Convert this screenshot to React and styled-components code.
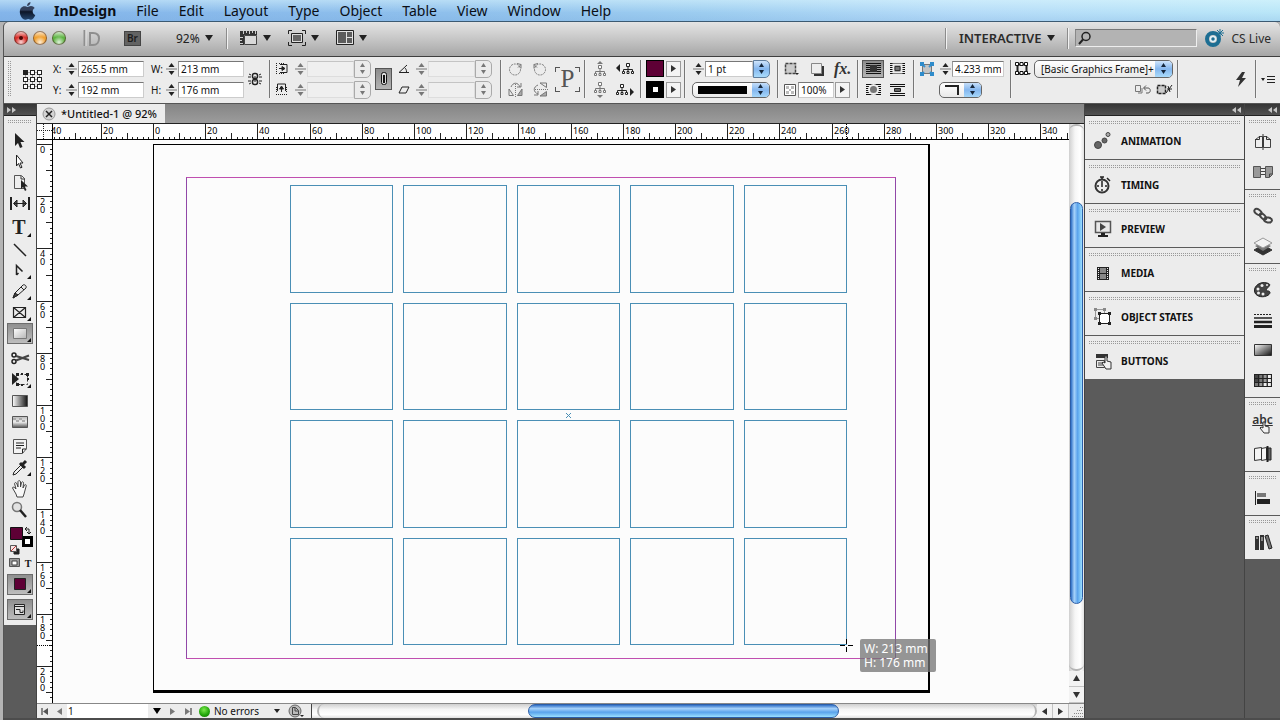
import { useState } from 'react'
import styled, { createGlobalStyle, css } from 'styled-components'

const GlobalStyle = createGlobalStyle`
  * { box-sizing: border-box; }
  body {
    margin: 0;
    font-family: 'Noto Sans', 'Open Sans', sans-serif;
    font-size: 10px;
    color: #111;
    background: #b4b4b4;
  }
  button, input, select {
    font: inherit;
    color: inherit;
    margin: 0;
    padding: 0;
    border: 0;
    border-radius: 0;
    background: none;
    outline-offset: -1px;
  }
  button {
    display: flex;
    align-items: center;
    justify-content: center;
  }
  select { appearance: none; }
  svg { display: block; flex: none; }
`

/* ---------- shell ---------- */

const Screen = styled.div`
  display: flex;
  flex-direction: column;
  height: 100vh;
  min-height: 640px;
  overflow: hidden;
`

const MenuBar = styled.nav`
  display: flex;
  align-items: center;
  flex: none;
  height: 22px;
  padding-left: 19px;
  font-size: 14px;
  border-bottom: 1px solid #3c5a72;
  background:
    linear-gradient(180deg, rgba(225, 250, 255, 0.5), rgba(255, 255, 255, 0) 60%, rgba(110, 160, 215, 0.2)),
    linear-gradient(90deg, #84b5ea, #8fc0ec 35%, #9dcdf0 55%, #b5dbf8 75%, #b9e6f8);
`

const MenuLink = styled.a`
  margin-left: ${({ $gap }) => $gap || 20}px;
  font-weight: ${({ $bold }) => ($bold ? 700 : 400)};
  color: #0b0f16;
  text-decoration: none;
  line-height: 20px;
`

const AppWindow = styled.div`
  display: flex;
  flex-direction: column;
  flex: 1;
  min-height: 0;
  margin: 0 0 2px 3px;
  border-left: 1px solid #555;
  border-radius: 5px 5px 0 0;
  background: #5b5b5b;
  box-shadow: 0 2px 0 #4c4c4c;
`

const AppBar = styled.header`
  display: flex;
  align-items: center;
  flex: none;
  height: 35px;
  padding: 0 9px 2px 10px;
  border-radius: 5px 5px 0 0;
  border-bottom: 1px solid #3f3f3f;
  background: linear-gradient(#e4e4e4, #c6c6c6 50%, #a6a6a6);
`

const Light = styled.button`
  width: 14px;
  height: 14px;
  margin-right: 5px;
  border-radius: 50%;
  border: 1px solid rgba(60, 30, 20, 0.5);
  background: radial-gradient(circle at 50% 85%, rgba(255, 255, 255, 0.8), transparent 50%),
    linear-gradient(rgba(255, 255, 255, 0.7), transparent 45%), ${({ $color }) => $color};
  &::after {
    content: '';
    width: 4px;
    height: 4px;
    border-radius: 50%;
    background: ${({ $dot }) => ($dot ? '#4a0705' : 'transparent')};
  }
`

const BarButton = styled.button`
  gap: ${({ $gap }) => $gap || 9}px;
  margin-left: ${({ $left }) => $left || 0}px;
  font-size: ${({ $size }) => $size || 12}px;
  font-weight: ${({ $bold }) => ($bold ? 600 : 400)};
  color: #2b2b2b;
`

const ZoomSelect = styled.select`
  width: 24px;
  margin-left: 35px;
  font-size: 12px;
  color: #222;
`

const Rule = styled.span`
  flex: none;
  width: 1px;
  height: ${({ $h }) => $h || 38}px;
  margin-left: ${({ $left }) => $left || 0}px;
  background: ${({ $h }) => ($h ? '#8c8c8c' : '#777')};
  box-shadow: 1px 0 0 #f2f2f2;
`

const Spacer = styled.span`
  flex: 1;
`

const Search = styled.label`
  display: flex;
  align-items: center;
  width: 122px;
  height: 18px;
  margin-left: 7px;
  padding: 0 2px;
  border: 1px solid #eee;
  border-top-color: #777;
  border-left-color: #888;
  background: #b3b3b3;
  input {
    flex: 1;
    min-width: 0;
  }
`

/* ---------- control bar ---------- */

const ControlStrip = styled.div`
  display: flex;
  align-items: center;
  flex: none;
  height: 47px;
  padding: 0 0 2px 4px;
  border-bottom: 1px solid #555;
  background: #ececec;
  white-space: nowrap;
`

const Group = styled.div`
  display: grid;
  grid-template-columns: ${({ $cols }) => $cols};
  grid-template-rows: 16px 16px;
  gap: 5px 0;
  flex: none;
  align-items: center;
  margin-left: ${({ $left }) => $left || 0}px;
`

const Cell = styled.span`
  display: flex;
  align-items: center;
  gap: ${({ $gap }) => $gap || 0}px;
  ${({ $end }) => $end && 'justify-content: flex-end;'}
  ${({ $tall }) => $tall && 'grid-row: span 2;'}
`

const FieldLabel = styled.label`
  font-size: 10px;
  line-height: 16px;
`

const StepButton = styled.button`
  width: 13px;
  height: 16px;
`

const TextField = styled.input`
  width: ${({ $w }) => $w || 66}px;
  height: 16px;
  padding: 0 2px;
  border: 1px solid #ccc;
  border-top-color: #777;
  border-left-color: #999;
  background: #fff;
  &:disabled {
    border-color: #ddd;
    border-top-color: #c4c4c4;
    background: #efefef;
  }
`

const blueCap = css`
  border: 1px solid #5f7d9d;
  background: linear-gradient(#cfe4fb, #84b6ee 50%, #a9dbfb);
`

const DropCap = styled.button`
  width: 17px;
  height: 18px;
  border: 1px solid #aaa;
  border-radius: 0 5px 5px 0;
  background: #ebebeb;
  ${({ $blue }) => $blue && blueCap}
`

const IconButton = styled.button`
  width: ${({ $w }) => $w || 16}px;
  height: ${({ $h }) => $h || 16}px;
  margin-left: ${({ $left }) => $left || 0}px;
  ${({ $pressed }) =>
    $pressed &&
    css`
      border: 1px solid #555;
      background: linear-gradient(#8c8c8c, #b4b4b4);
    `}
  ${({ $framed }) =>
    $framed &&
    css`
      border: 1px solid #9a9a9a;
      background: #f4f4f4;
    `}
`

const Popup = styled.button`
  justify-content: space-between;
  width: ${({ $w }) => $w}px;
  height: 16px;
  padding-left: 5px;
  border: 1px solid #666;
  border-radius: 5px;
  background: linear-gradient(#fff, #e9e9e9);
  overflow: hidden;
`

const PopupCap = styled.span`
  display: flex;
  align-items: center;
  justify-content: center;
  width: 17px;
  height: 16px;
  background: linear-gradient(#cfe4fb, #84b6ee 50%, #a9dbfb);
`

const StyleBox = styled.div`
  display: flex;
  align-items: center;
  width: 139px;
  height: 18px;
  border: 1px solid #666;
  border-radius: 5px;
  background: linear-gradient(#fff, #e9e9e9);
  overflow: hidden;
  select {
    flex: 1;
    min-width: 0;
    padding-left: 6px;
  }
`

const Swatch = styled.button`
  width: 18px;
  height: 17px;
  border: 1px solid #000;
  background: ${({ $color }) => $color};
`

/* ---------- workspace ---------- */

const Workspace = styled.div`
  display: flex;
  flex: 1;
  min-height: 0;
`

const DarkHead = styled.div`
  display: flex;
  align-items: center;
  justify-content: ${({ $end }) => ($end ? 'flex-end' : 'flex-start')};
  height: 12px;
  padding: 0 3px;
  border-bottom: 1px solid #222;
  background: linear-gradient(#353535, #525252);
`

const Grip = styled.div`
  width: ${({ $w }) => ($w ? `${$w}px` : 'auto')};
  height: 3px;
  margin: ${({ $m }) => $m || '0 4px'};
  background:
    linear-gradient(#ececec, #ececec) center / 100% 1px no-repeat,
    repeating-linear-gradient(90deg, #999 0 1px, transparent 1px 2px);
`

const SideGrip = styled.div`
  width: 3px;
  height: 36px;
  background:
    linear-gradient(#ececec, #ececec) center / 1px 100% no-repeat,
    repeating-linear-gradient(#999 0 1px, transparent 1px 2px);
`

const ToolColumn = styled.aside`
  flex: none;
  width: 33px;
  border-right: 1px solid #444;
`

const ToolBody = styled.div`
  display: flex;
  flex-direction: column;
  align-items: center;
  padding: 4px 0 5px;
  background: #ececec;
`

const ToolGroup = styled.div`
  display: flex;
  flex-direction: column;
  margin-top: ${({ $top }) => $top || 4}px;
`

const Tool = styled.button`
  width: 26px;
  height: 21px;
  ${({ $active }) =>
    $active &&
    css`
      border: 1px solid #6c6c6c;
      background: linear-gradient(#8f8f8f, #bdbdbd);
    `}
`

const DocumentArea = styled.main`
  display: flex;
  flex-direction: column;
  flex: 1;
  min-width: 0;
  border-right: 1px solid #444;
  background: #fcfcfc;
`

const TabStrip = styled.div`
  display: flex;
  flex: none;
  height: 20px;
  border-bottom: 1px solid #222;
  background: linear-gradient(#858585, #9c9c9c);
`

const Tab = styled.div`
  display: flex;
  align-items: center;
  gap: 5px;
  width: 128px;
  padding-left: 5px;
  font-size: 11px;
  font-weight: 500;
  white-space: nowrap;
  background: #ececec;
`

const Editor = styled.div`
  display: grid;
  grid-template-columns: 16px minmax(0, 1fr) 15px;
  grid-template-rows: 16px minmax(0, 1fr);
  flex: 1;
  min-height: 0;
`

const RulerSvg = styled.svg`
  width: 100%;
  height: 100%;
  overflow: hidden;
  background: #fff;
  font-size: 9px;
`

const Canvas = styled.div`
  position: relative;
  overflow: hidden;
  background: #fcfcfc;
`

const Page = styled.div`
  position: absolute;
  left: 100px;
  top: 4px;
  width: 777px;
  height: 549px;
  border: 1px solid #000;
  border-right-width: 2px;
  border-bottom-width: 3px;
`

const Margins = styled.div`
  position: absolute;
  left: 32px;
  top: 32px;
  width: 710px;
  height: 482px;
  border: 1px solid #c04fb0;
  border-left-color: #9148a8;
  border-right-color: #9148a8;
`

const FrameGrid = styled.div`
  position: absolute;
  left: 136px;
  top: 40px;
  width: 557px;
  height: 460px;
  display: grid;
  grid-template-columns: repeat(5, 1fr);
  grid-template-rows: repeat(4, 1fr);
  gap: 10px;
`

const Frame = styled.div`
  border: 1px solid #4a8fb5;
`

const CenterMark = styled.svg`
  position: absolute;
  left: 412px;
  top: 268px;
`

const Crosshair = styled.svg`
  position: absolute;
  left: 686px;
  top: 494px;
`

const SizeTip = styled.output`
  position: absolute;
  left: 706px;
  top: 494px;
  width: 76px;
  padding: 3px 4px 2px;
  border-radius: 2px;
  background: rgba(115, 115, 115, 0.75);
  color: #fff;
  font-size: 12px;
  line-height: 14px;
  white-space: pre-line;
`

const VScroll = styled.div`
  grid-column: 3;
  grid-row: 1 / span 2;
  display: flex;
  flex-direction: column;
  background: linear-gradient(90deg, #cfcfcf, #f6f6f6 40%, #fff 75%, #e2e2e2);
`

const VThumb = styled.button`
  flex: 405;
  width: 13px;
  margin-left: 1px;
  border: 1px solid #2c5ea8;
  border-radius: 7px;
  background: linear-gradient(90deg, #2f6fc6, #a6d2fa 30%, #5aa3ec 60%, #9be0ff);
`

const ScrollGap = styled.span`
  flex: ${({ $n }) => $n};
  ${({ $cap }) => $cap && css`
    border-${$cap}: 2px solid #b5b5b5;
    border-radius: 7px;
  `}
`

const ArrowButton = styled.button`
  flex: none;
  width: ${({ $v }) => ($v ? 15 : 16)}px;
  height: ${({ $v }) => ($v ? 16 : 14)}px;
  ${({ $v }) => ($v ? 'border-bottom' : 'border-right')}: 1px solid #c4c4c4;
  background: #f3f3f3;
`

const StatusBar = styled.footer`
  display: flex;
  flex: none;
  height: 15px;
  border-top: 1px solid #888;
  background: #ececec;
`

const StatusInfo = styled.div`
  display: flex;
  align-items: center;
  flex: none;
  width: 275px;
  border-right: 1px solid #444;
`

const NavButton = styled.button`
  width: ${({ $w }) => $w || 15}px;
  height: 14px;
`

const PageInput = styled.input`
  width: 81px;
  height: 14px;
  padding-left: 1px;
  background: #fff;
`

const Preflight = styled.button`
  gap: 4px;
  margin-left: 4px;
  font-size: 10px;
`

const GreenDot = styled.span`
  width: 11px;
  height: 11px;
  border-radius: 50%;
  background: radial-gradient(circle at 45% 35%, #7dea4e, #23a70c 55%, #0c6d02);
`

const HScroll = styled.div`
  display: flex;
  flex: 1;
  min-width: 0;
  padding-left: 5px;
  background: linear-gradient(#cfcfcf, #f6f6f6 40%, #fff 75%, #e2e2e2);
`

const HThumb = styled.button`
  flex: 313;
  height: 14px;
  border: 1px solid #2c5ea8;
  border-radius: 7px;
  background: linear-gradient(#2f6fc6, #a6d2fa 30%, #5aa3ec 60%, #9be0ff);
`

/* ---------- panels ---------- */

const PanelColumn = styled.aside`
  flex: none;
  width: ${({ $w }) => $w}px;
  ${({ $line }) => $line && 'border-right: 1px solid #444;'}
`

const PanelRow = styled.button`
  display: grid;
  grid-template-columns: 36px 1fr;
  grid-template-rows: 9px 32px;
  align-content: start;
  justify-items: start;
  align-items: center;
  width: 100%;
  height: 44px;
  border-bottom: 1px solid #5b5b5b;
  background: #ececec;
  font-size: 10px;
  font-weight: 700;
  text-align: left;
  svg { justify-self: center; }
  ${Grip} {
    grid-column: 1 / -1;
    justify-self: stretch;
    align-self: end;
    margin-bottom: 1px;
  }
`

const DockGroup = styled.div`
  display: flex;
  flex-direction: column;
  align-items: stretch;
  padding-bottom: 2px;
  border-bottom: 1px solid #5b5b5b;
  background: #ececec;
`

const DockButton = styled.button`
  width: 35px;
  height: 30px;
`

/* ---------- drawings ---------- */

const Icon = ({ w = 16, h = w, children }) => (
  <svg width={w} height={h} viewBox={`0 0 ${w} ${h}`} fill="none" stroke="#222" aria-hidden="true">
    {children}
  </svg>
)

const Caret = ({ color = '#222' }) => (
  <Icon w={8} h={6}><path d="M0 0h8L4 6z" fill={color} stroke="none" /></Icon>
)

const SmallCaret = () => (
  <Icon w={6} h={4}><path d="M0 0h6L3 4z" fill="#222" stroke="none" /></Icon>
)

const Tri = ({ dir, color = '#333' }) => {
  const d = {
    left: 'M6 0v7L1 3.500z',
    right: 'M1 0v7L6 3.500z',
    up: 'M0 6h7L3.500 0z',
    down: 'M0 1h7L3.500 7z',
  }[dir]
  return <Icon w={7}><path d={d} fill={color} stroke="none" /></Icon>
}

const UpDown = ({ color = '#222', line }) => (
  <Icon w={11} h={14}>
    <path d="M5.500 1l3 4h-6zM5.500 13l3-4h-6z" fill={color} stroke="none" />
    {line && <path d="M0 7h11" stroke="#777" />}
  </Icon>
)

const CapArrows = ({ color = '#16273c' }) => (
  <Icon w={7} h={11}><path d="M3.500 0L6 4H1zM3.500 11L6 7H1z" fill={color} stroke="none" /></Icon>
)

const Chevrons = ({ right }) => (
  <Icon w={9} h={6}>
    <path d={right ? 'M0 0l4 3-4 3zM5 0l4 3-4 3z' : 'M4 0L0 3l4 3zM9 0L5 3l4 3z'} fill="#c6c6c6" stroke="none" />
  </Icon>
)

const AppleLogo = () => (
  <Icon w={17} h={18}>
    <defs>
      <linearGradient id="apple" x1="0" y1="0" x2="0" y2="1">
        <stop offset="0" stopColor="#39435c" />
        <stop offset=".45" stopColor="#32405c" />
        <stop offset=".55" stopColor="#0d1628" />
        <stop offset="1" stopColor="#24466e" />
      </linearGradient>
    </defs>
    <path
      d="M11.500 0c.2 2.200-1.500 4-3.400 4C7.900 2 9.600.3 11.500 0zM8.500 5c1 0 1.800-.9 3.500-.9 1.500 0 2.900.8 3.700 2-3 1.800-2.500 5.800.6 7-.7 2-2.300 4.600-4 4.600-1.200 0-1.700-.8-3.100-.8s-2 .8-3.100.8C3.600 17.700.8 13.600.8 10 .8 6.500 3 4.300 5.300 4.300c1.400 0 2.300.7 3.200.7z"
      fill="url(#apple)" stroke="none"
    />
  </Icon>
)

const IdLogo = () => (
  <Icon w={20} h={18}>
    <path d="M2.500 1v16M8 4h3c4 0 6 2 6 5.500S15 16 11 16H8z" stroke="#8f8f8f" strokeWidth="2" />
    <path d="M4 1v16" stroke="#e4e4e4" />
  </Icon>
)

const Bridge = styled.span`
  display: flex;
  align-items: center;
  justify-content: center;
  width: 17px;
  height: 15px;
  border: 1px solid #444;
  background: #636363;
  color: #1c1c1c;
  font-size: 10px;
  font-weight: 600;
`

const RulerViewIcon = () => (
  <Icon w={19} h={16}>
    <path d="M1 1h17v4H5v10H1z" fill="#333" stroke="none" />
    <path d="M4.500 1v3M7.500 1v2M10.500 1v3M13.500 1v2M16.500 1v3M1 7.500h3M1 10.500h2M1 13.500h3" stroke="#ccc" />
    <path d="M5.500 5.500h12v9h-12z" fill="#d9d9d9" stroke="#444" />
  </Icon>
)

const ScreenModeIcon = () => (
  <Icon w={18} h={16}>
    <path d="M.5 4V.5H4M14 .5h3.500V4M17.500 12v3.500H14M4 15.500H.5V12" />
    <path d="M3.500 3.500h11v9h-11z" fill="#ddd" />
    <path d="M5 5h8v6H5z" fill="#666" stroke="none" />
  </Icon>
)

const ArrangeIcon = () => (
  <Icon w={18} h={16}>
    <path d="M.5.5h17v14H.5z" fill="#e2e2e2" />
    <path d="M2 2h8v11H2zM11 2h5v5h-5zM11 8h5v5h-5z" fill="#5c5c5c" stroke="none" />
  </Icon>
)

const MagnifierIcon = () => (
  <Icon w={14} h={14}>
    <circle cx="8" cy="5.500" r="4" strokeWidth="1.500" />
    <path d="M5 8.500L1 13" strokeWidth="2" />
  </Icon>
)

const CsLiveIcon = () => (
  <Icon w={20} h={18}>
    <circle cx="9" cy="10" r="6" stroke="#1d6e93" strokeWidth="4" />
    <circle cx="9" cy="10" r="2.500" fill="#1d6e93" stroke="#e2f2f8" strokeWidth="1.500" />
    <path d="M16 0v8M12 4h8M13 1l6 6M19 1l-6 6" stroke="#1d6e93" />
  </Icon>
)

const RefPoints = () => (
  <Icon w={19} h={19}>
    <path d="M3 2.500h13M3 9.500h13M3 16.500h13M2.500 3v13M9.500 3v13M16.500 3v13" stroke="#999" />
    {[0, 7, 14].map((y) =>
      [0, 7, 14].map((x) => (
        <rect key={`${x}-${y}`} x={x + 0.5} y={y + 0.5} width="4" height="4" fill={x + y === 0 ? '#222' : '#fff'} />
      ))
    )}
  </Icon>
)

const ChainBroken = () => (
  <Icon w={14}>
    <rect x="4.500" y="1.500" width="5" height="5" rx="2" strokeWidth="1.500" />
    <rect x="4.500" y="7.500" width="5" height="5" rx="2" strokeWidth="1.500" />
    <path d="M7 4v6M1 2l2 1M0 5h3M0 9h3M1 12l2-1M13 2l-2 1M14 5h-3M14 9h-3M13 12l-2-1" />
  </Icon>
)

const ScaleX = ({ turn }) => (
  <Icon w={13} h={13}>
    <g transform={turn ? 'matrix(0 -1 1 0 0 13)' : undefined}>
      <path d="M1.500 1v11M4 1.500h5M4 11.500h5" strokeDasharray="1 1" />
      <path d="M5 2.500h7v8H5" />
      <path d="M4 6.500h5M7 4.500l3 2-3 2z" fill="#222" />
    </g>
  </Icon>
)

const ChainIcon = () => (
  <Icon w={10} h={16}>
    <rect x="2.500" y="1.500" width="5" height="12" rx="2" fill="#ddd" stroke="#111" />
    <path d="M5 4v8" stroke="#111" strokeWidth="2" />
  </Icon>
)

const AngleIcon = () => (
  <Icon w={12} h={10}><path d="M11 8.500H1L9 1M7 4c1 1 1.500 2 1.500 4" /></Icon>
)

const ShearIcon = () => (
  <Icon w={12} h={8}><path d="M4 1h7L8 7H1z" /></Icon>
)

const RotateIcon = ({ flip }) => (
  <Icon w={14}>
    <g transform={flip ? 'matrix(-1 0 0 1 14 0)' : undefined} stroke="#777">
      <circle cx="7" cy="7.500" r="5.500" strokeDasharray="2 1" />
      <path d="M9 1.500l4 1v4M13 2.500l-3 3" />
    </g>
  </Icon>
)

const MirrorIcon = ({ turn }) => (
  <Icon w={15}>
    <g transform={turn ? 'matrix(0 1 1 0 0 0)' : undefined} stroke="#777">
      <path d="M1 13.500V7l4.500 6.500z" /><path d="M14 13.500V7l-4.500 6.500z" fill="#aaa" />
      <path d="M7.500 2v13" strokeDasharray="1 1" />
      <path d="M3 5c2-5 7-5 9 0M13 1v4H9" />
    </g>
  </Icon>
)

const Corners = styled.span`
  display: flex;
  align-items: center;
  justify-content: center;
  width: 25px;
  height: 25px;
  font-family: 'Liberation Serif', serif;
  font-size: 25px;
  color: #555;
  --ink: linear-gradient(#555, #555);
  background:
    var(--ink) 0 0 / 5px 1px, var(--ink) 0 0 / 1px 5px,
    var(--ink) 100% 0 / 5px 1px, var(--ink) 100% 0 / 1px 5px,
    var(--ink) 0 100% / 5px 1px, var(--ink) 0 100% / 1px 5px,
    var(--ink) 100% 100% / 5px 1px, var(--ink) 100% 100% / 1px 5px;
  background-repeat: no-repeat;
`

const TreeIcon = ({ kind }) => {
  const grey = kind === 'up' || kind === 'down'
  const ink = grey ? '#777' : '#222'
  const arrow = {
    up: 'M8 0l3 3H5z',
    down: 'M8 16l3-3H5z',
    left: 'M0 7l4-4v8z',
    right: 'M18 10l-4-4v8z',
  }[kind]
  const shift = { up: '0 2', down: '0 -2', left: '4 0', right: '-2 0' }[kind]
  return (
    <Icon w={18} h={16}>
      <path d={arrow} fill={ink} stroke="none" />
      <g transform={`translate(${shift})`} stroke={ink}>
        <path d="M8 5v3M3.500 11V8.500h9V11M8 8v3" />
        <path d="M6.500 2.500h3v3h-3zM2.500 10.500h2v2h-2zM7 10.500h2v2H7zM11.500 10.500h2v2h-2z" fill="#fff" />
      </g>
    </Icon>
  )
}

const EffectTarget = () => (
  <Icon w={16} h={14}>
    <path d="M1.500 1.500h10v10h-10z" fill="#ccc" stroke="#444" strokeWidth="1.500" strokeDasharray="3 1" />
    <path d="M11 11h4l-2 2z" fill="#222" stroke="none" />
  </Icon>
)

const ShadowIcon = () => (
  <Icon w={14}>
    <path d="M4 4h10v10H4z" fill="#333" stroke="none" />
    <path d="M1.500 1.500h10v10h-10z" fill="#eee" stroke="#888" />
  </Icon>
)

const OpacityIcon = () => (
  <Icon w={12}>
    <path d="M.5.5h11v11H.5z" fill="#fff" stroke="#555" />
    <path d="M2 2h3v3H2zM7 2h3v3H7zM5 5h2v2H5zM2 7h3v3H2zM7 7h3v3H7z" fill="#bbb" stroke="none" />
  </Icon>
)

const Fx = styled.em`
  font-family: 'Liberation Serif', serif;
  font-size: 16px;
  font-weight: 700;
  line-height: 14px;
  color: #333;
`

const WrapIcon = ({ kind }) => (
  <Icon w={15} h={14}>
    {kind === 'jump'
      ? <path d="M0 1.500h15M0 3.500h15M0 10.500h15M0 12.500h15" stroke="#111" />
      : <path d="M0 1.500h15M0 3.500h15M0 5.500h15M0 7.500h15M0 9.500h15M0 11.500h15" stroke="#111" />}
    {kind === 'none' && <path d="M4 3h7v7H4z" fill="#333" stroke="none" />}
    {kind === 'box' && <path d="M3.500 2.500h8v8h-8z" fill="#777" stroke="#eee" strokeWidth="2" />}
    {kind === 'box' && <path d="M5 4.500h5v4H5z" stroke="#333" />}
    {kind === 'shape' && <circle cx="7.500" cy="6.500" r="4.500" fill="#777" stroke="#eee" strokeWidth="2" />}
    {kind === 'jump' && <path d="M4.500 5.500h6v3h-6z" fill="#666" />}
  </Icon>
)

const FitIcon = () => (
  <Icon w={16}>
    <path d="M3.500 3.500h9v9h-9z" fill="#c4c4c4" stroke="#777" />
    <path d="M2 2l4 4M14 2l-4 4M2 14l3-3M14 14l-3-3" stroke="#3c93cf" strokeWidth="2" />
    <path d="M1 1h4v4H1zM11 1h4v4h-4zM1 11h4v4H1zM11 11h4v4h-4z" fill="#2f8ccb" stroke="none" />
  </Icon>
)

const ObjectStyleIcon = () => (
  <Icon w={16} h={14}>
    <path d="M2.500 2.500h9v9h-9z" strokeWidth="2" />
    <path d="M.5.5h3v3h-3zM5 .5h3v3H5zM9.500.5h3v3h-3zM.5 9.500h3v3h-3zM5 9.500h3v3H5zM9.500 9.500h3v3h-3z" fill="#fff" stroke="#111" />
    <path d="M12 11h4l-2 2z" fill="#222" stroke="none" />
  </Icon>
)

const ClearIcon = ({ dark }) => (
  <Icon w={17} h={11}>
    {dark ? (
      <>
        <path d="M1.500 1.500h8v8h-8z" fill="#ccc" strokeWidth="1.500" strokeDasharray="3 1" />
        <path d="M10 9l6-8M11 5h5M12 2l2 6" />
      </>
    ) : (
      <>
        <path d="M1.500 1.500h5v6h-5zM4 9h4V4" stroke="#777" />
        <path d="M10 4h4c3 0 3 5 0 5h-2M12 1.500L9.500 4 12 6.500" stroke="#555" />
      </>
    )}
  </Icon>
)

const Bolt = () => (
  <Icon w={12} h={15}><path d="M7 0L1 8h4L3 15l8-9H7l3-6z" fill="#333" stroke="none" /></Icon>
)

const PanelMenuIcon = () => (
  <Icon w={14} h={9}>
    <path d="M0 3h4L2 6z" fill="#222" stroke="none" /><path d="M6 1.500h8M6 4.500h8M6 7.500h8" />
  </Icon>
)

const ToolArt = ({ children, more }) => (
  <Icon w={24} h={19}>
    {children}
    {more && <path d="M23 14v4h-4z" fill="#111" stroke="none" />}
  </Icon>
)

const toolArt = {
  selection: <ToolArt><path d="M7 2v13l3-3 2 5 2.500-1-2-5h4z" fill="#222" stroke="none" /></ToolArt>,
  direct: <ToolArt><path d="M8.500 3v11l2-2.500 2 4.500 1.500-.7-2-4.300h3z" fill="#fff" /></ToolArt>,
  page: (
    <ToolArt>
      <path d="M6.500 2.500h7l3 3v10h-10z" fill="#eee" stroke="#555" /><path d="M13 3v3h4" stroke="#333" />
      <path d="M13 7v9l2-2 2 4 1.500-1-1.700-3.500H20z" fill="#222" stroke="none" />
    </ToolArt>
  ),
  gap: (
    <ToolArt>
      <path d="M3 3v13M21 3v13" strokeWidth="2" />
      <path d="M6 9.500h12M9 6L5.500 9.500 9 13zM15 6l3.500 3.500L15 13z" fill="#555" />
    </ToolArt>
  ),
  type: (
    <ToolArt more>
      <text x="11" y="15" textAnchor="middle" fontFamily="Liberation Serif, serif" fontWeight="700" fontSize="20" fill="#222" stroke="none">T</text>
    </ToolArt>
  ),
  line: <ToolArt><path d="M6 4l12 12" strokeWidth="1.500" /></ToolArt>,
  pen: <ToolArt more><path d="M8.500 14V4.500l6 6M8.500 14l2-2" strokeWidth="1.500" /></ToolArt>,
  pencil: (
    <ToolArt more>
      <path d="M5 16l2-5 8-8c1.500-1 4 1 3 3l-8 7z" fill="#e8e8e8" /><path d="M5 16l2-5 3 2zM13 5l3 3" fill="#444" />
    </ToolArt>
  ),
  xframe: <ToolArt more><path d="M5.500 4.500h12v10h-12zM5.500 4.500l12 10M17.500 4.500l-12 10" strokeWidth="1.200" /></ToolArt>,
  rectangle: (
    <ToolArt more>
      <defs><linearGradient id="rect" y2="1"><stop stopColor="#fff" /><stop offset="1" stopColor="#b5b5b5" /></linearGradient></defs>
      <path d="M5.500 4.500h13v10h-13z" fill="url(#rect)" stroke="#777" />
    </ToolArt>
  ),
  scissors: (
    <ToolArt>
      <circle cx="6" cy="6" r="2" strokeWidth="1.500" /><circle cx="6" cy="12.500" r="2" strokeWidth="1.500" />
      <path d="M8 7l13 4M8 11.500l13-5" strokeWidth="2" stroke="#444" />
    </ToolArt>
  ),
  transform: (
    <ToolArt more>
      <path d="M8.500 4.500h11v10h-11z" strokeDasharray="2 2" />
      <path d="M8 3h3v3H8zM13 3h2v2h-2zM18 3h3v3h-3zM19 8h2v2h-2zM8 13h3v3H8zM13 14h2v2h-2z" fill="#222" stroke="none" />
      <path d="M4 3v12l7-6z" fill="#222" stroke="none" />
    </ToolArt>
  ),
  gradient: (
    <ToolArt>
      <defs><linearGradient id="g1"><stop stopColor="#fff" /><stop offset="1" stopColor="#111" /></linearGradient></defs>
      <path d="M4.500 4.500h15v11h-15z" fill="url(#g1)" stroke="#555" />
    </ToolArt>
  ),
  feather: (
    <ToolArt>
      <defs><linearGradient id="g2" x2="0" y2="1"><stop stopColor="#bbb" /><stop offset=".5" stopColor="#eee" /><stop offset="1" stopColor="#555" /></linearGradient></defs>
      <path d="M4.500 4.500h15v11h-15z" fill="url(#g2)" stroke="#555" />
      <path d="M5 6h3v2H5zM11 6h3v2h-3zM8 8h3v2H8zM14 8h3v2h-3z" fill="#aaa" stroke="none" />
    </ToolArt>
  ),
  note: (
    <ToolArt>
      <path d="M5.500 2.500h13v9l-4 5h-9z" fill="#f3f3f3" stroke="#555" /><path d="M8 6h8M8 8.500h8M8 11h5M14.500 16v-4h4" />
    </ToolArt>
  ),
  eyedropper: (
    <ToolArt more>
      <path d="M5 17l1-3 7-7 2 2-7 7z" fill="#eee" /><path d="M12 5l5 5M14 7l4-4" strokeWidth="3" />
    </ToolArt>
  ),
  hand: (
    <ToolArt>
      <path d="M8 15L4.500 9c0-1.500 2-1 3.500 1L6.500 4.500c.5-1.500 2-1 2.500.5l1 3V2.500c.5-1.500 2.500-1 2.500.5v5l1-4.500c.7-1.300 2.300-.7 2 .8L15 9l1.500-3c1-1 2-.2 1.700 1L16 15l-1 3H9z" fill="#f8f8f8" stroke="#444" />
    </ToolArt>
  ),
  zoom: (
    <ToolArt>
      <circle cx="9" cy="7" r="4.500" fill="#e2e2e2" stroke="#777" strokeWidth="1.500" /><path d="M12 10l6 7" strokeWidth="2.500" />
    </ToolArt>
  ),
}

const FormatRow = styled.div`
  display: flex;
  align-items: center;
  gap: 5px;
  height: 14px;
  font-family: 'Liberation Serif', serif;
  font-size: 10px;
  font-weight: 700;
`

const FillStroke = () => (
  <Icon w={26} h={32}>
    <path d="M16.500 13.500h8v8h-8z" fill="#fff" stroke="#000" strokeWidth="3" />
    <path d="M3.500 3.500h12v12h-12z" fill="#5e0035" stroke="#111" />
    <path d="M18 5h4v4M20 3l-2 2 2 2M20 8l2 2 2-2" />
    <path d="M7 25h5v5H7z" fill="#222" /><path d="M3.500 21.500h6v6h-6z" fill="#f4e4e4" stroke="#555" />
    <path d="M4 27l5-5" stroke="#b33" />
  </Icon>
)

const P = ({ children }) => <Icon w={20}>{children}</Icon>

const panelArt = {
  ANIMATION: (
    <P>
      <g fill="#666" stroke="#444"><circle cx="5" cy="14" r="3.500" /><circle cx="11.500" cy="9.500" r="2.500" /><circle cx="15" cy="3.500" r="2" fill="#aaa" /></g>
    </P>
  ),
  TIMING: (
    <P>
      <circle cx="9" cy="11" r="6.500" fill="#eee" stroke="#333" strokeWidth="2" />
      <path d="M9 2v2M7 2h4M14 3l3 3M9 6v6M4 11h2M12 11h2M9 14v2" strokeWidth="1.500" />
    </P>
  ),
  PREVIEW: (
    <P>
      <path d="M2.500 2.500h15v11h-15z" fill="#e8e8e8" stroke="#555" strokeWidth="1.500" />
      <path d="M7 4l6 4-6 4z" fill="#444" stroke="none" /><path d="M8 15h4M5 17h10" strokeWidth="2" />
    </P>
  ),
  MEDIA: (
    <P>
      <path d="M4 4h12v13H4z" fill="#222" stroke="none" /><path d="M7 5h6v5H7zM7 11h6v5H7z" fill="#888" stroke="none" />
      <path d="M5.500 5v11M14.500 5v11" stroke="#eee" strokeDasharray="1 1" />
    </P>
  ),
  'OBJECT STATES': (
    <P>
      <path d="M2.500 2.500h9v9h-9z" stroke="#999" /><path d="M1 1h3v3H1zM10 1h3v3h-3zM1 10h3v3H1z" fill="#888" stroke="none" />
      <path d="M6.500 6.500h10v10h-10z" fill="#fff" />
      <path d="M5 5h3v3H5zM15 5h3v3h-3zM5 15h3v3H5zM15 15h3v3h-3z" fill="#222" stroke="none" />
    </P>
  ),
  BUTTONS: (
    <P>
      <path d="M3 3h12v4H3z" fill="#333" stroke="none" /><path d="M3.500 9.500h8v7h-8zM5 12h5M5 14h5" stroke="#444" />
      <path d="M12 5v7l-2-1-1 1 4 6h5v-7l-4-1V5z" fill="#f2f2f2" stroke="#333" />
    </P>
  ),
}

const dockArt = {
  Pages: (
    <P>
      <path d="M2.500 15.500v-8l4-3h3v11zM17.500 15.500v-8l-4-3h-3v11z" fill="#eee" stroke="#444" />
      <path d="M2 7.500h4.500V4M18 7.500h-4.500V4M10 2v16" stroke="#333" />
    </P>
  ),
  'Page Transitions': (
    <Icon w={22} h={16}>
      <path d="M1.500 2.500h7v11h-7zM13.500 2.500h7v8l-3 3h-4z" fill="#999" stroke="#555" />
      <path d="M9 4.500h4M9 7.500h4M9 10.500h4M17.500 13v-3h3" stroke="#444" />
    </Icon>
  ),
  Links: (
    <P>
      <g strokeWidth="2" stroke="#444">
        <ellipse cx="5" cy="6" rx="4" ry="2.500" transform="rotate(35 5 6)" />
        <ellipse cx="15" cy="14" rx="4" ry="2.500" transform="rotate(10 15 14)" />
        <ellipse cx="10" cy="10.500" rx="4" ry="2" transform="rotate(45 10 10.500)" />
      </g>
    </P>
  ),
  Layers: (
    <P>
      <path d="M10 9l9 5-9 5-9-5z" fill="#333" stroke="#333" /><path d="M10 6l8 4-8 5-8-5z" fill="#777" stroke="none" />
      <path d="M10 2l9 5-9 5-9-5z" fill="#f2f2f2" stroke="#999" />
    </P>
  ),
  Color: (
    <P>
      <path d="M14 3C7 1 1 6 1.500 11c.3 5 7 7 12 5 3-1 5-4 2-5-2 0-3-1-1-3s4-4-.5-5z" fill="#444" stroke="#222" />
      <g fill="#eee" stroke="none"><circle cx="5" cy="9" r="1.500" /><circle cx="9" cy="5.500" r="1.500" /><circle cx="5.500" cy="13" r="1.500" /><circle cx="10" cy="14" r="1.500" /><circle cx="14" cy="5" r="1" /></g>
    </P>
  ),
  Stroke: (
    <P>
      <path d="M1 4.500h18" strokeDasharray="2 1" /><path d="M1 8h18" strokeWidth="1.500" />
      <path d="M1 12h18" strokeWidth="2.500" /><path d="M1 16.500h18" strokeWidth="3" />
    </P>
  ),
  Gradient: (
    <P>
      <defs><linearGradient id="g3" y2="1"><stop stopColor="#fff" /><stop offset="1" stopColor="#111" /></linearGradient></defs>
      <path d="M1.500 4.500h17v11h-17z" fill="url(#g3)" stroke="#333" />
    </P>
  ),
  Swatches: (
    <P>
      <path d="M1 4h18v13H1z" fill="#222" stroke="none" />
      {[0, 1, 2, 3].map((c) => [0, 1, 2].map((r) => (
        <rect key={`${c}${r}`} x={2 + c * 4.300} y={5 + r * 4} width="3" height="3" fill={['#444', '#777', '#999', '#eee'][Math.min(3, c + (r > 1))]} stroke="none" />
      )))}
    </P>
  ),
  Bookmarks: (
    <P>
      <path d="M1.500 4.500l7-1v12l-7 1zM8.500 4.500l5-1v12l-5 1z" fill="#f4f4f4" stroke="#333" />
      <path d="M14 4h4v12h-4z" fill="#666" stroke="#222" /><path d="M14.500 2v16" strokeWidth="2" />
    </P>
  ),
  Align: (
    <P>
      <path d="M2.500 3v14" /><path d="M4 5h9v4H4z" fill="#777" stroke="none" /><path d="M4 11h13v5H4z" fill="#222" stroke="none" />
    </P>
  ),
  Library: (
    <P>
      <path d="M2 4h4v14H2zM7 3h4v15H7z" fill="#333" stroke="none" /><path d="M3 6h2M8 6h2M8 8h2" stroke="#ddd" />
      <path d="M12 4l3-1 4 13-3 1z" fill="#777" stroke="#222" />
    </P>
  ),
}

const AbcLabel = styled.span`
  display: grid;
  justify-items: center;
  color: #333;
  font-size: 12px;
  font-weight: 600;
  line-height: 9px;
  text-decoration: underline;
  svg { margin: -3px 0 0 5px; }
`

const HandPointer = () => (
  <Icon w={14} h={13}>
    <path d="M5 1v6L3 6 2 7l4 5h5V6L7 5V1z" fill="#f2f2f2" stroke="#333" />
  </Icon>
)

/* ---------- data ---------- */

const MENUS = ['File', 'Edit', 'Layout', 'Type', 'Object', 'Table', 'View', 'Window', 'Help']

const TOOL_GROUPS = [
  ['selection', 'direct', 'page', 'gap'],
  ['type', 'line', 'pen', 'pencil', 'xframe', 'rectangle'],
  ['scissors', 'transform', 'gradient', 'feather'],
  ['note', 'eyedropper', 'hand', 'zoom'],
]

const DOCK_GROUPS = [
  ['Pages', 'Page Transitions'],
  ['Links', 'Layers'],
  ['Color', 'Stroke', 'Gradient', 'Swatches'],
  ['Hyperlinks', 'Bookmarks'],
  ['Align'],
  ['Library'],
]

const PX_PER_MM = 2.61
const MARKS = Array.from({ length: 800 }, (_, i) => (i - 20) * 2)

/* ---------- parts ---------- */

const tickLength = (mm) => (mm % 20 === 0 ? 16 : mm % 10 === 0 ? 7 : 3)

const Ruler = ({ vertical, origin, cursor }) => {
  // only draw as far as the window reaches
  const reach = vertical ? window.innerHeight - 180 : window.innerWidth - 230
  const place = (mm) => Math.round(origin + mm * PX_PER_MM)
  const marks = MARKS.filter((mm) => place(mm) > -10 && place(mm) < reach + 20)
  const ticks = marks.map((mm) => {
    const at = place(mm) + 0.5
    const from = 16 - tickLength(mm)
    return vertical ? `M${from} ${at}H16` : `M${at} ${from}V16`
  }).join('')
  const labels = marks.filter((mm) => mm % 20 === 0 && place(mm) < reach)
  return (
    <RulerSvg aria-hidden="true">
      <path d={ticks} stroke="#222" />
      <path d={vertical ? 'M15.500 0V4000' : 'M0 15.500H4000'} stroke="#000" />
      <path d={vertical ? `M0 ${cursor}H16` : `M${cursor} 0V16`} stroke="#000" strokeDasharray="1 1" />
      {labels.map((mm) => {
        if (!vertical) return <text key={mm} x={place(mm) + 2} y="10">{Math.abs(mm)}</text>
        return String(mm).split('').map((digit, i) => (
          <text key={`${mm}-${i}`} x="3" y={place(mm) + 9 + i * 8}>{digit}</text>
        ))
      })}
    </RulerSvg>
  )
}

const Stepper = ({ id, label, w, disabled, value }) => (
  <Cell>
    <StepButton aria-label={`Step ${label}`} disabled={disabled}>
      <UpDown line color={disabled ? '#777' : '#222'} />
    </StepButton>
    <TextField id={id} aria-label={label} $w={w} disabled={disabled} defaultValue={value} />
  </Cell>
)

const DisabledCombo = ({ label }) => (
  <Cell>
    <Stepper label={label} w={47} disabled />
    <DropCap aria-label={`${label} presets`} disabled><CapArrows color="#777" /></DropCap>
  </Cell>
)

const ControlBar = () => (
  <ControlStrip>
    <SideGrip />
    <Group $cols="19px" $left={12}><Cell $tall><RefPoints /></Cell></Group>
    <Group $cols="12px 79px" $left={11}>
      <FieldLabel htmlFor="x">X:</FieldLabel><Stepper id="x" label="X" value="265.5 mm" />
      <FieldLabel htmlFor="y">Y:</FieldLabel><Stepper id="y" label="Y" value="192 mm" />
    </Group>
    <Group $cols="14px 79px" $left={7}>
      <FieldLabel htmlFor="w">W:</FieldLabel><Stepper id="w" label="W" value="213 mm" />
      <FieldLabel htmlFor="h">H:</FieldLabel><Stepper id="h" label="H" value="176 mm" />
    </Group>
    <Group $cols="14px" $left={4}><Cell $tall><ChainBroken /></Cell></Group>
    <Rule $left={7} />
    <Group $cols="19px 77px" $left={5}>
      <ScaleX /><DisabledCombo label="Scale X" />
      <ScaleX turn /><DisabledCombo label="Scale Y" />
    </Group>
    <IconButton $w={17} $h={22} $left={4} $pressed aria-label="Constrain proportions"><ChainIcon /></IconButton>
    <Group $cols="17px 77px" $left={6}>
      <AngleIcon /><DisabledCombo label="Rotation" />
      <ShearIcon /><DisabledCombo label="Shear" />
    </Group>
    <Rule $left={8} />
    <Group $cols="25px 22px 25px" $left={7}>
      <RotateIcon /><RotateIcon flip /><Cell $tall><Corners>P</Corners></Cell>
      <MirrorIcon /><MirrorIcon turn />
    </Group>
    <Rule $left={4} />
    <Group $cols="24px 18px" $left={7}>
      <TreeIcon kind="up" /><TreeIcon kind="left" />
      <TreeIcon kind="down" /><TreeIcon kind="right" />
    </Group>
    <Rule $left={6} />
    <Group $cols="20px 15px" $left={5}>
      <Swatch $color="#5e0035" aria-label="Fill" />
      <IconButton $w={15} $framed aria-label="Fill options"><Tri dir="right" /></IconButton>
      <Swatch $color="linear-gradient(#fff, #fff) center / 5px 5px no-repeat, #000" aria-label="Stroke" />
      <IconButton $w={15} $framed aria-label="Stroke options"><Tri dir="right" /></IconButton>
    </Group>
    <Rule $left={3} />
    <Group $cols="78px" $left={7}>
      <Cell>
        <Stepper label="Stroke weight" w={48} value="1 pt" />
        <DropCap $blue aria-label="Stroke weight presets"><CapArrows /></DropCap>
      </Cell>
      <Popup $w={78} aria-label="Stroke type">
        <Icon w={49} h={8}><path d="M0 0h49v8H0z" fill="#000" stroke="none" /></Icon>
        <PopupCap><CapArrows /></PopupCap>
      </Popup>
    </Group>
    <Rule $left={7} />
    <Group $cols="68px" $left={6}>
      <Cell $gap={10}><EffectTarget /><ShadowIcon /><Fx>fx.</Fx></Cell>
      <Cell $gap={2}>
        <OpacityIcon />
        <Cell $gap={1}>
          <TextField $w={36} aria-label="Opacity" defaultValue="100%" />
          <IconButton $w={15} $framed aria-label="Opacity slider"><Tri dir="right" /></IconButton>
        </Cell>
      </Cell>
    </Group>
    <Rule $left={5} />
    <Group $cols="28px 15px" $left={4}>
      <IconButton $w={22} $h={18} $pressed aria-label="No text wrap"><WrapIcon kind="none" /></IconButton>
      <WrapIcon kind="box" />
      <IconButton $w={22} aria-label="Wrap around shape"><WrapIcon kind="shape" /></IconButton>
      <WrapIcon kind="jump" />
    </Group>
    <Rule $left={8} />
    <Group $cols="20px 66px" $left={5}>
      <FitIcon /><Stepper label="Corner size" w={52} value="4.233 mm" />
      <span />
      <Popup $w={43} aria-label="Corner shape">
        <Icon w={14} h={10}><path d="M0 1h13v9" strokeWidth="2" /></Icon>
        <PopupCap><CapArrows /></PopupCap>
      </Popup>
    </Group>
    <Rule $left={5} />
    <Group $cols="19px 139px" $left={4}>
      <ObjectStyleIcon />
      <StyleBox>
        <select aria-label="Object style"><option>[Basic Graphics Frame]+</option></select>
        <PopupCap><CapArrows /></PopupCap>
      </StyleBox>
      <span />
      <Cell $gap={5} $end><ClearIcon /><ClearIcon dark /></Cell>
    </Group>
    <Rule $left={4} />
    <Spacer />
    <IconButton aria-label="Quick apply"><Bolt /></IconButton>
    <Rule $left={6} />
    <IconButton $w={24} aria-label="Panel menu"><PanelMenuIcon /></IconButton>
  </ControlStrip>
)

const ToolBox = () => {
  const [active, setActive] = useState('rectangle')
  return (
    <ToolColumn>
      <DarkHead><Chevrons right /></DarkHead>
      <ToolBody>
        <Grip $w={24} $m="0" />
        {TOOL_GROUPS.map((group, i) => (
          <ToolGroup key={group[0]} $top={i === 0 ? 7 : 4}>
            {group.map((name) => (
              <Tool key={name} aria-label={name} $active={name === active} onClick={() => setActive(name)}>
                {toolArt[name]}
              </Tool>
            ))}
          </ToolGroup>
        ))}
        <ToolGroup><FillStroke /></ToolGroup>
        <FormatRow>
          <Icon w={11} h={10}>
            <path d="M.5.5h10v8H.5z" fill="#999" stroke="#555" /><path d="M3 3h5v4H3z" fill="#fff" stroke="#444" />
          </Icon>
          T
        </FormatRow>
        <ToolGroup>
          <Tool $active aria-label="Apply color">
            <ToolArt more><path d="M6.500 3.500h11v11h-11z" fill="#5e0035" stroke="#222" /></ToolArt>
          </Tool>
        </ToolGroup>
        <ToolGroup>
          <Tool $active aria-label="View mode">
            <ToolArt more>
              <path d="M6.500 4.500h10v10h-10z" fill="#ddd" /><path d="M6 6.500h11M8 9.500h4v3h3v-2" />
            </ToolArt>
          </Tool>
        </ToolGroup>
      </ToolBody>
    </ToolColumn>
  )
}

const Status = () => (
  <StatusBar>
    <StatusInfo>
      <NavButton aria-label="First page"><Icon w={8} h={7}><path d="M1 0v7" /><path d="M7 0v7L2 3.500z" fill="#555" stroke="none" /></Icon></NavButton>
      <NavButton aria-label="Previous page"><Tri dir="left" color="#777" /></NavButton>
      <PageInput aria-label="Page" defaultValue="1" />
      <NavButton $w={17} aria-label="Page list"><Caret color="#000" /></NavButton>
      <NavButton aria-label="Next page"><Tri dir="right" color="#777" /></NavButton>
      <NavButton aria-label="Last page"><Icon w={8} h={7}><path d="M7 0v7" /><path d="M1 0v7l5-3.500z" fill="#777" stroke="none" /></Icon></NavButton>
      <Preflight>
        <GreenDot />No errors
      </Preflight>
      <Spacer />
      <SmallCaret />
      <NavButton $w={31} aria-label="Preflight menu">
        <Icon w={16} h={14}>
          <circle cx="7" cy="7" r="6" fill="#bbb" stroke="#666" />
          <path d="M4.500 3.500h3l3 3v4h-6zM7 4v3h3" stroke="#444" /><path d="M12 11h4l-2 2z" fill="#222" stroke="none" />
        </Icon>
      </NavButton>
    </StatusInfo>
    <HScroll>
      <ScrollGap $n={211} $cap="left" />
      <HThumb aria-label="Scroll horizontally" />
      <ScrollGap $n={198} $cap="right" />
      <ArrowButton aria-label="Scroll left"><Tri dir="left" /></ArrowButton>
      <ArrowButton aria-label="Scroll right"><Tri dir="right" /></ArrowButton>
    </HScroll>
    <Icon w={15} h={14}>
      <path d="M11 3.500h3M8 6.500h6M5 9.500h9M3 12.500h11" stroke="#888" strokeDasharray="1 1" />
    </Icon>
  </StatusBar>
)

const DocumentView = () => (
  <DocumentArea>
    <TabStrip>
      <Tab>
        <button aria-label="Close document">
          <Icon w={14}>
            <circle cx="7" cy="7" r="6" fill="#d4d4d4" stroke="#999" /><path d="M4 4l6 6M10 4l-6 6" strokeWidth="1.500" />
          </Icon>
        </button>
        *Untitled-1 @ 92%
      </Tab>
    </TabStrip>
    <Editor>
      <Icon w={16}>
        <path d="M6.500 0v16M0 6.500h16" strokeDasharray="1 1" /><path d="M15.500 0v16M0 15.500h16" stroke="#000" />
      </Icon>
      <Ruler origin={100} cursor={793.5} />
      <VScroll>
        <ScrollGap $n={77} $cap="top" />
        <VThumb aria-label="Scroll vertically" />
        <ScrollGap $n={66} $cap="bottom" />
        <ArrowButton $v aria-label="Scroll up"><Tri dir="up" /></ArrowButton>
        <ArrowButton $v aria-label="Scroll down"><Tri dir="down" /></ArrowButton>
      </VScroll>
      <Ruler vertical origin={4} cursor={505.5} />
      <Canvas>
        <Page>
          <Margins />
          <FrameGrid>
            {Array.from({ length: 20 }, (_, i) => <Frame key={i} />)}
          </FrameGrid>
          <CenterMark width="5" height="5"><path d="M0 0l5 5M5 0L0 5" stroke="#4a8fb5" /></CenterMark>
          <Crosshair width="13" height="13">
            <path d="M0 6.500h5M8 6.500h5M6.500 0v5M6.500 8v5" stroke="#000" />
          </Crosshair>
          <SizeTip>{'W: 213 mm\nH: 176 mm'}</SizeTip>
        </Page>
      </Canvas>
    </Editor>
    <Status />
  </DocumentArea>
)

const Panels = () => (
  <>
    <PanelColumn $w={160} $line>
      <DarkHead $end><Chevrons /></DarkHead>
      {Object.entries(panelArt).map(([name, art]) => (
        <PanelRow key={name}>
          <Grip />
          {art}
          {name}
        </PanelRow>
      ))}
    </PanelColumn>
    <PanelColumn $w={35}>
      <DarkHead $end><Chevrons /></DarkHead>
      {DOCK_GROUPS.map((group) => (
        <DockGroup key={group[0]}>
          <Grip $m="4px" />
          {group.map((name) => (
            <DockButton key={name} aria-label={name}>
              {dockArt[name] || <AbcLabel>abc<HandPointer /></AbcLabel>}
            </DockButton>
          ))}
        </DockGroup>
      ))}
    </PanelColumn>
  </>
)

const App = () => (
  <>
    <GlobalStyle />
    <Screen>
      <MenuBar>
        <AppleLogo />
        <MenuLink href="#indesign" $bold $gap={18}>InDesign</MenuLink>
        {MENUS.map((name) => <MenuLink key={name} href={`#${name.toLowerCase()}`}>{name}</MenuLink>)}
      </MenuBar>
      <AppWindow>
        <AppBar>
          <Light $color="#d9302b" $dot aria-label="Close" />
          <Light $color="#f0a030" aria-label="Minimize" />
          <Light $color="#5fb544" aria-label="Zoom window" />
          <BarButton $left={11} aria-label="About"><IdLogo /></BarButton>
          <BarButton $left={22} aria-label="Bridge"><Bridge>Br</Bridge></BarButton>
          <ZoomSelect aria-label="Zoom level"><option>92%</option></ZoomSelect>
          <BarButton $left={5} aria-label="Zoom presets"><Caret /></BarButton>
          <Rule $h={21} $left={13} />
          <BarButton $left={12} $gap={5} aria-label="View options"><RulerViewIcon /><Caret /></BarButton>
          <BarButton $left={17} $gap={5} aria-label="Screen mode"><ScreenModeIcon /><Caret /></BarButton>
          <BarButton $left={17} $gap={5} aria-label="Arrange documents"><ArrangeIcon /><Caret /></BarButton>
          <Spacer />
          <Rule $h={21} />
          <BarButton $left={13} $gap={6} $size={13} $bold>INTERACTIVE<Caret /></BarButton>
          <Rule $h={21} $left={12} />
          <Search><MagnifierIcon /><input type="text" aria-label="Search" /></Search>
          <BarButton $left={7} $gap={7}><CsLiveIcon />CS Live</BarButton>
        </AppBar>
        <ControlBar />
        <Workspace>
          <ToolBox />
          <DocumentView />
          <Panels />
        </Workspace>
      </AppWindow>
    </Screen>
  </>
)

export default App
